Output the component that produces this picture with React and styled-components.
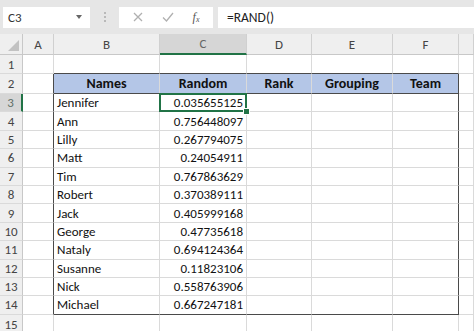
import React from "react";
import styled, { createGlobalStyle } from "styled-components";

const Global = createGlobalStyle`
  html, body { margin: 0; padding: 0; background: #fff; }
  body { width: 474px; height: 331px; overflow: hidden; font-family: Calibri, Carlito, Lato, "Liberation Sans", sans-serif; }
`;

const Page = styled.div`
  width: 474px;
  height: 331px;
  overflow: hidden;
  display: flex;
  flex-direction: column;
`;

const FormulaBar = styled.div`
  height: 34px;
  flex: none;
  background: #e6e6e6;
  display: flex;
  align-items: center;
  padding-left: 3px;
  box-sizing: border-box;
`;

const NameBox = styled.div`
  width: 87px;
  height: 21px;
  background: #fff;
  display: flex;
  align-items: center;
  justify-content: space-between;
  padding: 0 8px 0 5px;
  box-sizing: border-box;
  font-size: 13px;
  color: #333;
`;

const Caret = styled.span`
  width: 0;
  height: 0;
  border-left: 3.5px solid transparent;
  border-right: 3.5px solid transparent;
  border-top: 4px solid #666;
`;

const Dots = styled.div`
  width: 29px;
  display: flex;
  flex-direction: column;
  align-items: center;
  gap: 2px;
  span { width: 2px; height: 2px; background: #aaa; border-radius: 1px; }
`;

const IconBox = styled.div`
  width: 94px;
  height: 21px;
  background: #fff;
  display: flex;
  align-items: center;
  justify-content: space-around;
  padding: 0 4px;
  box-sizing: border-box;
  color: #b3b3b3;
`;

const Fx = styled.span`
  font-family: "Liberation Serif", serif;
  font-style: italic;
  font-size: 12px;
  color: #555;
  sub { font-size: 8px; vertical-align: baseline; position: relative; top: 1px; }
`;

const FormulaInput = styled.div`
  flex: 1;
  height: 21px;
  background: #fff;
  margin-left: 5px;
  display: flex;
  align-items: center;
  padding-left: 9px;
  font-size: 13.5px;
  color: #222;
`;

const Sheet = styled.div`
  display: grid;
  grid-template-columns: 23px 31px 106px 87px 65px 81px 66px 15px;
  grid-template-rows: 21px 19px 20px repeat(12, 18.4px) 20px;
  flex: none;
`;

const Cell = styled.div`
  position: relative;
  box-sizing: border-box;
  border-right: 1px solid ${(p) => (p.$br ? "#4a4a4a" : "#dadada")};
  border-bottom: 1px solid ${(p) => (p.$bb ? "#4a4a4a" : "#dadada")};
  background: ${(p) => (p.$fill ? "#b4c6e7" : "#fff")};
  font-size: ${(p) => (p.$bold ? "14px" : "13px")};
  color: #111;
  font-weight: ${(p) => (p.$bold ? 700 : 400)};
  display: flex;
  align-items: center;
  justify-content: ${(p) => (p.$align === "right" ? "flex-end" : p.$align === "center" ? "center" : "flex-start")};
  padding: 0 3px;
  white-space: nowrap;
  overflow: visible;
  ${(p) =>
    p.$selected &&
    `
    &::after {
      content: "";
      position: absolute;
      left: -1px; top: -1px; right: -1px; bottom: -1px;
      border: 2px solid #217346;
    }
    &::before {
      content: "";
      position: absolute;
      right: -4px; bottom: -4px;
      width: 5px; height: 5px;
      background: #217346;
      border: 1px solid #fff;
      z-index: 2;
    }
  `}
`;

const ColHead = styled.div`
  box-sizing: border-box;
  background: ${(p) => (p.$active ? "#d6d6d6" : "#efefef")};
  border-right: 1px solid #d0d0d0;
  border-bottom: ${(p) => (p.$active ? "2px solid #217346" : "1px solid #c8c8c8")};
  color: ${(p) => (p.$active ? "#666" : "#444")};
  font-size: 13px;
  display: flex;
  align-items: center;
  justify-content: center;
`;

const Corner = styled.div`
  box-sizing: border-box;
  background: #efefef;
  border-right: 1px solid #c8c8c8;
  border-bottom: 1px solid #c8c8c8;
  position: relative;
  &::after {
    content: "";
    position: absolute;
    right: 3px; bottom: 3px;
    width: 0; height: 0;
    border-left: 11px solid transparent;
    border-bottom: 11px solid #c2c2c2;
  }
`;

const RowHead = styled.div`
  box-sizing: border-box;
  background: ${(p) => (p.$active ? "#d6d6d6" : "#efefef")};
  border-right: ${(p) => (p.$active ? "2px solid #217346" : "1px solid #c8c8c8")};
  border-bottom: 1px solid #dadada;
  color: ${(p) => (p.$active ? "#5f6f66" : "#444")};
  font-size: 13px;
  display: flex;
  align-items: center;
  justify-content: center;
`;

const data = [
  ["Jennifer", "0.035655125"],
  ["Ann", "0.756448097"],
  ["Lilly", "0.267794075"],
  ["Matt", "0.24054911"],
  ["Tim", "0.767863629"],
  ["Robert", "0.370389111"],
  ["Jack", "0.405999168"],
  ["George", "0.47735618"],
  ["Nataly", "0.694124364"],
  ["Susanne", "0.11823106"],
  ["Nick", "0.558763906"],
  ["Michael", "0.667247181"],
];

const cols = ["A", "B", "C", "D", "E", "F", ""];
const headers = ["Names", "Random", "Rank", "Grouping", "Team"];

function XIcon() {
  return (
    <svg width="10" height="10" viewBox="0 0 10 10">
      <path d="M1 1L9 9M9 1L1 9" stroke="#b0b0b0" strokeWidth="1.3" />
    </svg>
  );
}
function CheckIcon() {
  return (
    <svg width="12" height="10" viewBox="0 0 12 10">
      <path d="M1 5.5L4.5 9L11 1" stroke="#b0b0b0" strokeWidth="1.3" fill="none" />
    </svg>
  );
}

export default function App() {
  const rows = [];
  for (let r = 1; r <= 15; r++) {
    const cells = [];
    cells.push(
      <RowHead key="h" $active={r === 3}>
        {r}
      </RowHead>
    );
    for (let c = 0; c < 7; c++) {
      const inTable = r >= 2 && r <= 14 && c >= 1 && c <= 5;
      const br = (c === 0 && r >= 2 && r <= 14) || (c === 5 && r >= 2 && r <= 14);
      const bb = (r === 1 && c >= 1 && c <= 5) || (r === 2 && inTable) || (r === 14 && inTable);
      let content = null;
      let align = "left";
      let bold = false;
      if (r === 2 && inTable) {
        content = headers[c - 1];
        align = "center";
        bold = true;
      } else if (r >= 3 && r <= 14) {
        if (c === 1) content = data[r - 3][0];
        if (c === 2) {
          content = data[r - 3][1];
          align = "right";
        }
      }
      cells.push(
        <Cell
          key={c}
          $br={br}
          $bb={bb}
          $fill={r === 2 && inTable}
          $bold={bold}
          $align={align}
          $selected={r === 3 && c === 2}
        >
          {content}
        </Cell>
      );
    }
    rows.push(<React.Fragment key={r}>{cells}</React.Fragment>);
  }

  return (
    <Page>
      <Global />
      <FormulaBar>
        <NameBox>
          C3
          <Caret />
        </NameBox>
        <Dots>
          <span />
          <span />
          <span />
        </Dots>
        <IconBox>
          <XIcon />
          <CheckIcon />
          <Fx>
            f<sub>x</sub>
          </Fx>
        </IconBox>
        <FormulaInput>=RAND()</FormulaInput>
      </FormulaBar>
      <Sheet>
        <Corner />
        {cols.map((c, i) => (
          <ColHead key={i} $active={c === "C"}>
            {c}
          </ColHead>
        ))}
        {rows}
      </Sheet>
    </Page>
  );
}
